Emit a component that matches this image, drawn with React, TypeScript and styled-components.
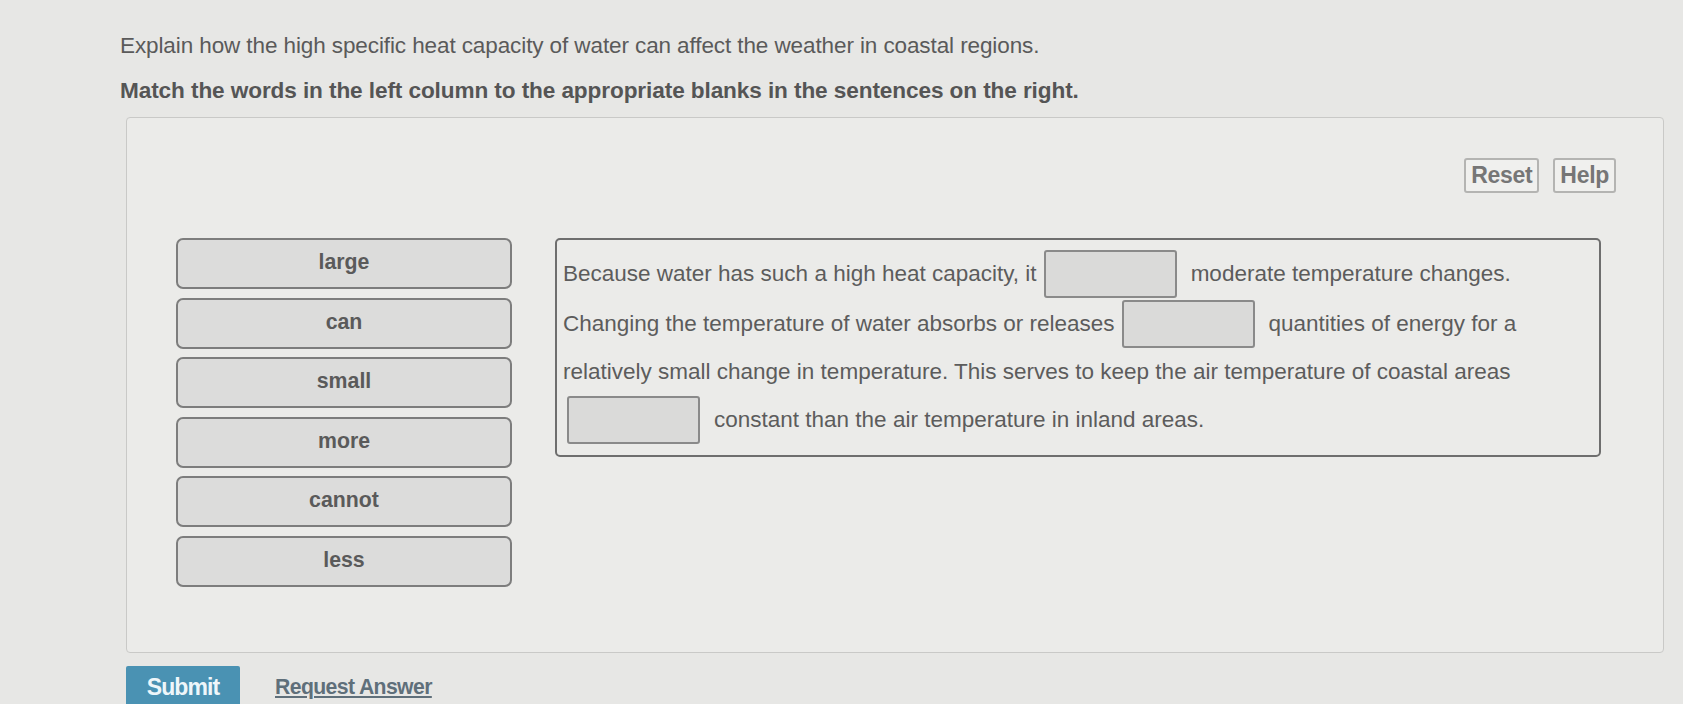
import React from "react";
import styled, { createGlobalStyle } from "styled-components";

const GlobalStyle = createGlobalStyle`
  html, body {
    margin: 0;
    padding: 0;
    background: #e7e7e5;
    font-family: "Liberation Sans", Arial, sans-serif;
    color: #575757;
    overflow: hidden;
  }
`;

const Page = styled.div`
  width: 1683px;
  height: 704px;
  box-sizing: border-box;
  padding: 30px 19px 0 126px;
  display: flex;
  flex-direction: column;
`;

const Prompt = styled.p`
  margin: 0 0 0 -6px;
  font-size: 22.5px;
  line-height: 32px;
  color: #5a5a5a;
  letter-spacing: -0.1px;
`;

const Instruction = styled.p`
  margin: 14px 0 0 -6px;
  font-size: 22.6px;
  line-height: 30px;
  font-weight: bold;
  color: #555;
  letter-spacing: -0.1px;
`;

const Panel = styled.div`
  flex: none;
  margin-top: 11px;
  height: 536px;
  box-sizing: border-box;
  border: 1.5px solid #c9c9c7;
  border-radius: 4px;
  background: #ebebe9;
  padding: 40px 47px 0 49px;
  display: flex;
  flex-direction: column;
`;

const Toolbar = styled.div`
  display: flex;
  justify-content: flex-end;
  gap: 14px;
`;

const ToolButton = styled.button`
  height: 35px;
  padding: 0 5px;
  border: 2px solid #b4b4b2;
  border-radius: 3px;
  background: #f0f0ee;
  font-family: "Liberation Sans", Arial, sans-serif;
  font-weight: bold;
  font-size: 23px;
  color: #767676;
  letter-spacing: -0.3px;
`;

const Board = styled.div`
  margin-top: 45px;
  display: flex;
  align-items: flex-start;
  gap: 43px;
`;

const WordColumn = styled.div`
  display: flex;
  flex-direction: column;
  gap: 8.5px;
  width: 336px;
`;

const WordTile = styled.div`
  height: 51px;
  box-sizing: border-box;
  border: 2px solid #7d7d7d;
  border-radius: 7px;
  background: #dcdcdb;
  display: flex;
  align-items: center;
  justify-content: center;
  padding-bottom: 2px;
  font-weight: bold;
  font-size: 21.3px;
  color: #5a5a5a;
`;

const SentenceBox = styled.div`
  width: 1046px;
  box-sizing: border-box;
  border: 2px solid #6e6e6e;
  border-radius: 5px;
  padding: 9px 6px 10px 6px;
  display: flex;
  flex-direction: column;
`;

const Line = styled.div<{ $h?: number }>`
  height: ${(p) => p.$h ?? 50}px;
  display: flex;
  align-items: center;
  white-space: nowrap;
  font-size: 22.5px;
  color: #5c5c5c;
`;

const Blank = styled.span<{ $first?: boolean }>`
  display: inline-block;
  flex: none;
  width: 133px;
  height: 48px;
  box-sizing: border-box;
  border: 2px solid #8a8a8a;
  border-radius: 3px;
  background: #dadad9;
  margin: 0 14px 0 ${(p) => (p.$first ? 4 : 7)}px;
`;

const Footer = styled.div`
  margin-top: 13px;
  display: flex;
  align-items: flex-start;
  gap: 35px;
`;

const SubmitButton = styled.button`
  flex: none;
  width: 114px;
  height: 46px;
  border: none;
  border-radius: 2px;
  background: #4a92b3;
  color: #eef6fa;
  font-family: "Liberation Sans", Arial, sans-serif;
  font-weight: bold;
  font-size: 23px;
  letter-spacing: -0.9px;
  padding: 0 0 4px;
`;

const AnswerLink = styled.a`
  margin-top: 9px;
  font-size: 21.2px;
  font-weight: bold;
  color: #5f6f7a;
  text-decoration: underline;
  letter-spacing: -0.6px;
`;

const words = ["large", "can", "small", "more", "cannot", "less"];

export default function App() {
  return (
    <>
      <GlobalStyle />
      <Page>
        <Prompt>
          Explain how the high specific heat capacity of water can affect the
          weather in coastal regions.
        </Prompt>
        <Instruction>
          Match the words in the left column to the appropriate blanks in the
          sentences on the right.
        </Instruction>
        <Panel>
          <Toolbar>
            <ToolButton>Reset</ToolButton>
            <ToolButton>Help</ToolButton>
          </Toolbar>
          <Board>
            <WordColumn>
              {words.map((w) => (
                <WordTile key={w}>{w}</WordTile>
              ))}
            </WordColumn>
            <SentenceBox>
              <Line>
                Because water has such a high heat capacity, it
                <Blank />
                moderate temperature changes.
              </Line>
              <Line>
                Changing the temperature of water absorbs or releases
                <Blank />
                quantities of energy for a
              </Line>
              <Line $h={46}>
                relatively small change in temperature. This serves to keep the
                air temperature of coastal areas
              </Line>
              <Line>
                <Blank $first />
                constant than the air temperature in inland areas.
              </Line>
            </SentenceBox>
          </Board>
        </Panel>
        <Footer>
          <SubmitButton>Submit</SubmitButton>
          <AnswerLink href="#">Request Answer</AnswerLink>
        </Footer>
      </Page>
    </>
  );
}
